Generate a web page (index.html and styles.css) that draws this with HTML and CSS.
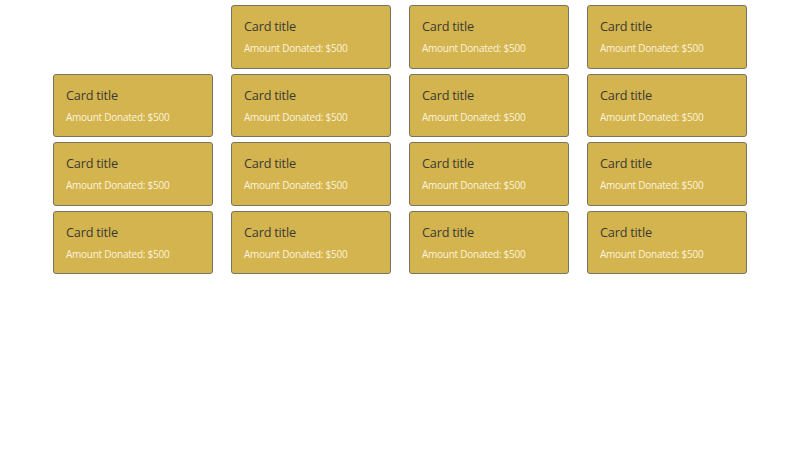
FILE: index.html
```html
<!DOCTYPE html>
<html>
<head>
<meta charset="utf-8">
<link rel="stylesheet" href="styles.css">
</head>
<body>
<div class="grid">
  <div class="spacer"></div>
  <div class="card"><div class="title">Card title</div><div class="text">Amount Donated: $500</div></div>
  <div class="card"><div class="title">Card title</div><div class="text">Amount Donated: $500</div></div>
  <div class="card"><div class="title">Card title</div><div class="text">Amount Donated: $500</div></div>
  <div class="card"><div class="title">Card title</div><div class="text">Amount Donated: $500</div></div>
  <div class="card"><div class="title">Card title</div><div class="text">Amount Donated: $500</div></div>
  <div class="card"><div class="title">Card title</div><div class="text">Amount Donated: $500</div></div>
  <div class="card"><div class="title">Card title</div><div class="text">Amount Donated: $500</div></div>
  <div class="card"><div class="title">Card title</div><div class="text">Amount Donated: $500</div></div>
  <div class="card"><div class="title">Card title</div><div class="text">Amount Donated: $500</div></div>
  <div class="card"><div class="title">Card title</div><div class="text">Amount Donated: $500</div></div>
  <div class="card"><div class="title">Card title</div><div class="text">Amount Donated: $500</div></div>
  <div class="card"><div class="title">Card title</div><div class="text">Amount Donated: $500</div></div>
  <div class="card"><div class="title">Card title</div><div class="text">Amount Donated: $500</div></div>
  <div class="card"><div class="title">Card title</div><div class="text">Amount Donated: $500</div></div>
  <div class="card"><div class="title">Card title</div><div class="text">Amount Donated: $500</div></div>
</div>
</body>
</html>
```
FILE: styles.css
```css
html, body {
  margin: 0;
  padding: 0;
  background: #ffffff;
  font-family: "Open Sans", "Noto Sans", sans-serif;
}
.grid {
  width: 694px;
  margin: 5px auto 0;
  display: grid;
  grid-template-columns: repeat(4, 160px);
  column-gap: 18px;
  row-gap: 5px;
}
.card {
  box-sizing: border-box;
  height: 63.6px;
  background: #d4b44f;
  border: 1px solid #76735f;
  border-radius: 3px;
  padding: 12px 12px 0;
}
.title {
  color: #3a3a32;
  font-size: 12.7px;
  line-height: 17px;
  letter-spacing: -0.2px;
}
.text {
  margin-top: 6px;
  color: #fbf3dc;
  font-size: 10px;
  line-height: 14px;
  letter-spacing: -0.25px;
}
```
